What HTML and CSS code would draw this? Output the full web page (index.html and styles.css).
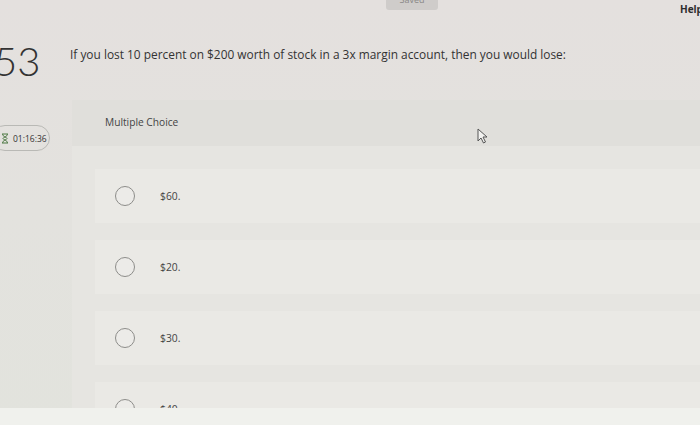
FILE: index.html
```html
<!DOCTYPE html>
<html>
<head>
<meta charset="utf-8">
<link rel="stylesheet" href="styles.css">
</head>
<body>
<div class="page">
  <div class="topbar">
    <div class="saved">Saved</div>
    <div class="help">Help</div>
  </div>
  <div class="main">
    <div class="side">
      <div class="qnum">53</div>
      <div class="timer">
        <svg class="hg" width="8" height="11" viewBox="0 0 8 11"><path d="M1 1h6M1 10h6M1.5 1c0 3 4.5 3 4.5 4.5S1.5 7 1.5 10M6.5 1c0 3-4.5 3-4.5 4.5S6.5 7 6.5 10" fill="none" stroke="#4f7a45" stroke-width="1"/></svg>
        <span>01:16:36</span>
      </div>
    </div>
    <div class="content">
      <p class="question">If you lost 10 percent on $200 worth of stock in a 3x margin account, then you would lose:</p>
      <div class="card">
        <div class="card-head">Multiple Choice</div>
        <div class="options">
          <div class="opt"><span class="radio"></span><span class="label">$60.</span></div>
          <div class="opt"><span class="radio"></span><span class="label">$20.</span></div>
          <div class="opt"><span class="radio"></span><span class="label">$30.</span></div>
          <div class="opt"><span class="radio"></span><span class="label">$40.</span></div>
        </div>
      </div>
    </div>
  </div>
  <div class="bottom"></div>
  <svg class="cursor" width="12" height="16" viewBox="0 0 12 16"><path d="M1 1v12l3-3 2.5 5 2-1-2.5-5h4z" fill="#f2f2f0" stroke="#555" stroke-width="1"/></svg>
</div>
</body>
</html>
```
FILE: styles.css
```css
html, body {
  margin: 0;
  padding: 0;
}
body {
  width: 700px;
  height: 425px;
  overflow: hidden;
  font-family: "Open Sans", "Lato", sans-serif;
  color: #3a3a3a;
  background: #e3e1de;
}
.page {
  position: relative;
  width: 700px;
  height: 425px;
  overflow: hidden;
  background: linear-gradient(180deg, #e4e0de 0%, #e3e2de 50%, #e2e3dd 100%);
}
.topbar {
  height: 30px;
  display: flex;
  align-items: flex-start;
}
.saved {
  margin-left: 386px;
  margin-top: -6px;
  width: 52px;
  height: 16px;
  border-radius: 3px;
  background: #cfccca;
  color: #8a8886;
  font-size: 9px;
  line-height: 12px;
  text-align: center;
}
.help {
  margin-left: auto;
  margin-right: -6px;
  margin-top: 2px;
  font-size: 10px;
  font-weight: 700;
  color: #2d2d2d;
  width: 26px;
}
.main {
  display: flex;
}
.side {
  width: 60px;
  flex: none;
}
.qnum {
  margin-left: -6px;
  margin-top: 10px;
  font-family: "Lato", sans-serif;
  font-size: 40px;
  line-height: 42px;
  font-weight: 300;
  color: #333;
}
.timer {
  margin-top: 43px;
  margin-left: -8px;
  width: 58px;
  height: 26px;
  box-sizing: border-box;
  border: 1px solid #b9b9b5;
  border-radius: 13px;
  display: flex;
  align-items: center;
  gap: 4px;
  padding-left: 8px;
  font-size: 8.5px;
  color: #333;
}
.hg {
  flex: none;
}
.content {
  flex: 1;
  padding-left: 10px;
}
.question {
  margin: 17px 0 0 0;
  font-size: 11.9px;
  line-height: 15px;
  color: #333;
  white-space: nowrap;
}
.card {
  margin-top: 38px;
  margin-left: 2px;
  background: #e6e5e1;
  height: 340px;
}
.card-head {
  height: 46px;
  box-sizing: border-box;
  padding-left: 33px;
  padding-top: 15px;
  font-size: 10.2px;
  color: #444;
  background: #e0dfdb;
}
.options {
  padding-left: 23px;
  padding-top: 23px;
  display: flex;
  flex-direction: column;
  gap: 17px;
}
.opt {
  height: 54px;
  background: #eae9e5;
  display: flex;
  align-items: center;
  padding-left: 20px;
}
.radio {
  width: 18px;
  height: 18px;
  border: 1.3px solid #8d8d8a;
  border-radius: 50%;
  background: #ecebe8;
  flex: none;
}
.label {
  margin-left: 25px;
  font-size: 10.3px;
  color: #444;
}
.bottom {
  position: absolute;
  left: 0;
  right: 0;
  bottom: 0;
  height: 17px;
  background: #f0f1ed;
}
.cursor {
  position: absolute;
  left: 477px;
  top: 128px;
}
```
